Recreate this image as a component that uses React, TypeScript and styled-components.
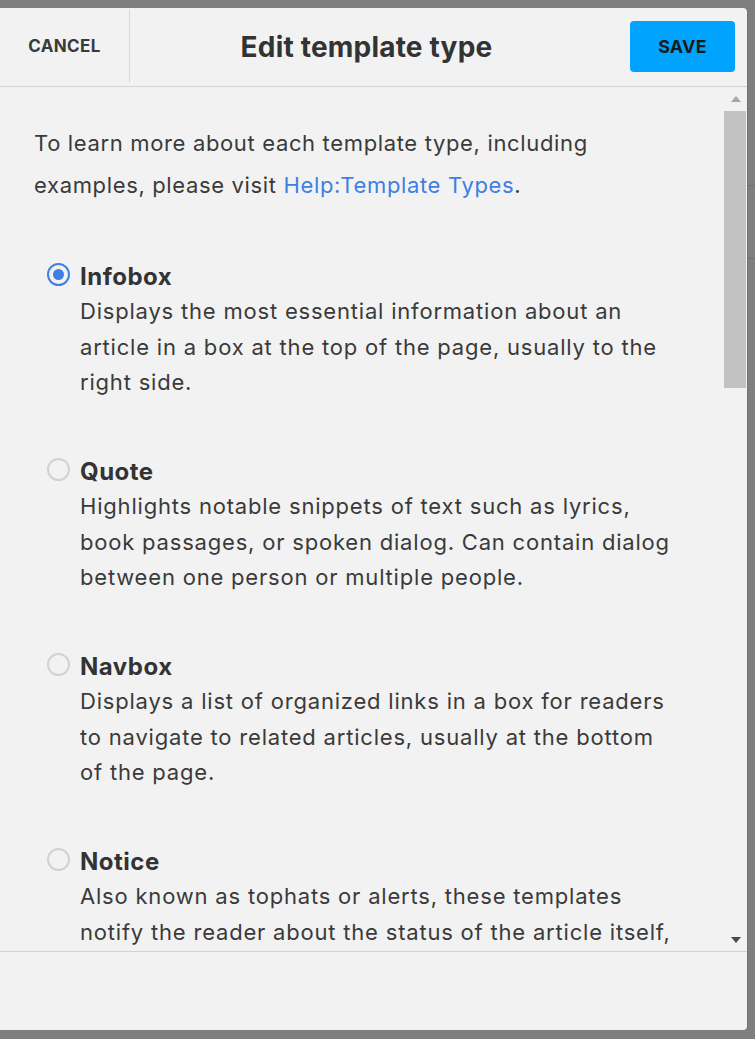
import React from 'react';
import styled, { createGlobalStyle } from 'styled-components';

const GlobalStyle = createGlobalStyle`
  html, body {
    margin: 0;
    padding: 0;
    min-height: 100vh;
    background-color: #7f7f7f;
    background-image:
      linear-gradient(#707070, #707070),
      linear-gradient(#707070, #707070);
    background-repeat: no-repeat;
    background-size: 100% 1px, 100% 1px;
    background-position: 0 185px, 0 258px;
  }
  #root {
    padding-top: 8px;
  }
`;

const Modal = styled.div`
  width: 747px;
  height: 1022px;
  background: #f2f2f2;
  border-radius: 0 4px 4px 0;
  box-shadow: 1px 0 0 #727272;
  display: flex;
  flex-direction: column;
  font-family: Inter, 'Noto Sans', sans-serif;
  color: #3a3a3a;
  overflow: hidden;
`;

const Header = styled.div`
  height: 78px;
  flex: none;
  display: flex;
  align-items: stretch;
  border-bottom: 1px solid #d3d3d3;
`;

const CancelButton = styled.button`
  width: 130px;
  flex: none;
  border: none;
  border-right: 1px solid #d8d8d8;
  margin: 1px 0 3px;
  background: transparent;
  font-family: inherit;
  font-size: 17px;
  font-weight: 700;
  letter-spacing: 0.4px;
  color: #3a3a3a;
  text-transform: uppercase;
  padding: 0;
`;

const Title = styled.h1`
  flex: 1;
  margin: 0;
  display: flex;
  align-items: center;
  justify-content: center;
  padding-right: 27px;
  font-size: 28px;
  font-weight: 700;
  letter-spacing: 0.2px;
  color: #333;
`;

const SaveArea = styled.div`
  flex: none;
  display: flex;
  align-items: flex-start;
  padding: 13px 12px 0 0;
`;

const SaveButton = styled.button`
  width: 105px;
  height: 51px;
  border: none;
  border-radius: 4px;
  background: #00a4ff;
  color: #1a1a1a;
  font-family: inherit;
  font-size: 18px;
  font-weight: 700;
  letter-spacing: 0.2px;
  text-transform: uppercase;
`;

const Body = styled.div`
  height: 864px;
  flex: none;
  display: flex;
  border-bottom: 1px solid #d3d3d3;
`;

const Content = styled.div`
  flex: 1;
  overflow: hidden;
  padding: 35px 0 0 34px;
`;

const Intro = styled.p`
  margin: 0 0 54px;
  font-size: 22px;
  line-height: 42px;
  letter-spacing: 0.65px;
`;

const HelpLink = styled.a`
  color: #3d7fe3;
  text-decoration: none;
`;

const Option = styled.div`
  display: flex;
  gap: 10px;
  padding-left: 13px;
  margin-bottom: 54.5px;
`;

const Radio = styled.span<{ $checked?: boolean }>`
  flex: none;
  width: 23px;
  height: 23px;
  margin-top: 3px;
  box-sizing: border-box;
  border-radius: 50%;
  border: 2px solid ${p => (p.$checked ? '#3f80e8' : '#d2d2d2')};
  display: flex;
  align-items: center;
  justify-content: center;
  &::after {
    content: '';
    width: 11px;
    height: 11px;
    border-radius: 50%;
    background: ${p => (p.$checked ? '#3f80e8' : 'transparent')};
  }
`;

const OptionText = styled.div`
  display: flex;
  flex-direction: column;
`;

const OptionName = styled.div`
  font-size: 24px;
  font-weight: 700;
  line-height: 34px;
  letter-spacing: 0.5px;
  color: #333;
`;

const DescLine = styled.span`
  font-size: 22px;
  line-height: 35.5px;
  letter-spacing: 0.8px;
  white-space: nowrap;
`;

const Scrollbar = styled.div`
  width: 23px;
  flex: none;
  display: flex;
  flex-direction: column;
`;

const ScrollButton = styled.div<{ $down?: boolean }>`
  height: 24px;
  flex: none;
  display: flex;
  justify-content: center;
  align-items: ${p => (p.$down ? 'flex-end' : 'center')};
  padding-bottom: ${p => (p.$down ? '8px' : '0')};
  box-sizing: border-box;
`;

const Track = styled.div`
  flex: 1;
`;

const Thumb = styled.div`
  width: 22px;
  height: 277px;
  background: #c2c2c2;
`;

const Footer = styled.div`
  flex: 1;
`;

const options = [
  {
    name: 'Infobox',
    checked: true,
    lines: [
      'Displays the most essential information about an',
      'article in a box at the top of the page, usually to the',
      'right side.',
    ],
  },
  {
    name: 'Quote',
    lines: [
      'Highlights notable snippets of text such as lyrics,',
      'book passages, or spoken dialog. Can contain dialog',
      'between one person or multiple people.',
    ],
  },
  {
    name: 'Navbox',
    lines: [
      'Displays a list of organized links in a box for readers',
      'to navigate to related articles, usually at the bottom',
      'of the page.',
    ],
  },
  {
    name: 'Notice',
    lines: [
      'Also known as tophats or alerts, these templates',
      'notify the reader about the status of the article itself,',
    ],
  },
];

const Arrow = ({ down }: { down?: boolean }) => (
  <svg width="10" height="6" viewBox="0 0 10 6">
    <path d={down ? 'M0 0 L10 0 L5 6 Z' : 'M0 6 L10 6 L5 0 Z'} fill={down ? '#4a4a4a' : '#a8a8a8'} />
  </svg>
);

const App = () => {
  return (
    <>
      <GlobalStyle />
      <Modal>
        <Header>
          <CancelButton>Cancel</CancelButton>
          <Title>Edit template type</Title>
          <SaveArea>
            <SaveButton>Save</SaveButton>
          </SaveArea>
        </Header>
        <Body>
          <Content>
            <Intro>
              To learn more about each template type, including
              <br />
              examples, please visit <HelpLink href="#">Help:Template Types</HelpLink>.
            </Intro>
            {options.map(opt => (
              <Option key={opt.name}>
                <Radio $checked={opt.checked} />
                <OptionText>
                  <OptionName>{opt.name}</OptionName>
                  {opt.lines.map(line => (
                    <DescLine key={line}>{line}</DescLine>
                  ))}
                </OptionText>
              </Option>
            ))}
          </Content>
          <Scrollbar>
            <ScrollButton>
              <Arrow />
            </ScrollButton>
            <Track>
              <Thumb />
            </Track>
            <ScrollButton $down>
              <Arrow down />
            </ScrollButton>
          </Scrollbar>
        </Body>
        <Footer />
      </Modal>
    </>
  );
};

export default App;
